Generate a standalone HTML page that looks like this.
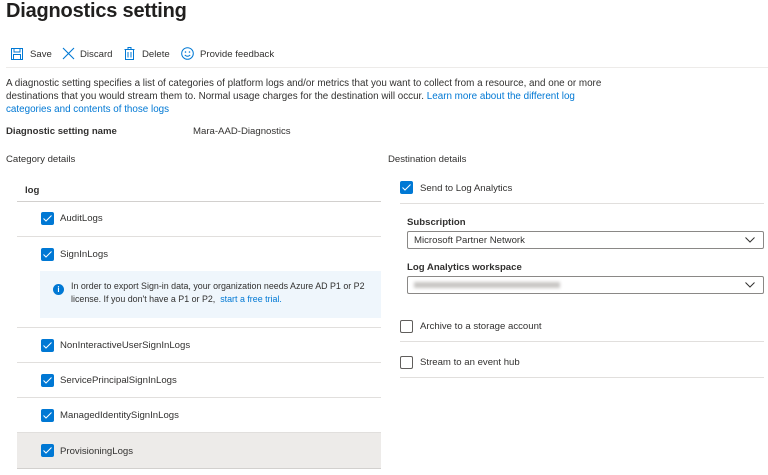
<!DOCTYPE html>
<html><head><meta charset="utf-8"><style>
body{margin:0;width:768px;height:475px;background:#fff;font-family:"Liberation Sans",sans-serif;color:#323130;position:relative;overflow:hidden}
.a{position:absolute;white-space:nowrap}
.t{font-size:9.6px}
.ln{position:absolute;height:1px;background:#e1dfdd}
.cb{position:absolute;width:13px;height:13px;border-radius:2px;background:#0078d4}
.cb svg{position:absolute;left:2px;top:3px}
.ub{position:absolute;width:11px;height:11px;border:1px solid #605e5c;border-radius:2px;background:#fff}
.lk{color:#0078d4}
.dd{position:absolute;border:1px solid #8a8886;border-radius:2px;height:16px;background:#fff}
.d{font-size:9.85px}
</style></head><body>
<div class="a" style="left:6px;top:0px;font-size:20px;font-weight:bold;color:#201f1e;letter-spacing:-0.2px">Diagnostics setting</div>

<svg class="a" style="left:11px;top:48px" width="12" height="12" viewBox="0 0 12 12"><rect x="0.5" y="0.5" width="11" height="11" fill="none" stroke="#0078d4"/><rect x="3" y="0.5" width="6" height="3.5" fill="none" stroke="#0078d4"/><rect x="2.5" y="6.5" width="7" height="5" fill="none" stroke="#0078d4"/></svg>
<div class="a t" style="left:30px;top:49px">Save</div>
<svg class="a" style="left:62px;top:47px" width="13" height="13" viewBox="0 0 13 13"><path d="M1 1L12 12M12 1L1 12" stroke="#0078d4" stroke-width="1.1"/></svg>
<div class="a t" style="left:80px;top:49px">Discard</div>
<svg class="a" style="left:124px;top:47px" width="11" height="13" viewBox="0 0 11 13"><path d="M0.5 2.5H10.5M4 2.5V0.5H7V2.5M1.5 2.5V12.5H9.5V2.5M4 5V10.5M7 5V10.5" fill="none" stroke="#0078d4"/></svg>
<div class="a t" style="left:142px;top:49px">Delete</div>
<svg class="a" style="left:181px;top:47px" width="13" height="13" viewBox="0 0 13 13"><circle cx="6.5" cy="6.5" r="5.8" fill="none" stroke="#0078d4"/><circle cx="4.5" cy="5" r="0.8" fill="#0078d4"/><circle cx="8.5" cy="5" r="0.8" fill="#0078d4"/><path d="M3.8 8Q6.5 10.5 9.2 8" fill="none" stroke="#0078d4"/></svg>
<div class="a t" style="left:200px;top:49px">Provide feedback</div>
<div class="ln" style="left:6px;top:67px;width:762px;background:#edebe9"></div>

<div class="a d" style="left:6px;top:78px">A diagnostic setting specifies a list of categories of platform logs and/or metrics that you want to collect from a resource, and one or more</div>
<div class="a d" style="left:6px;top:91px">destinations that you would stream them to. Normal usage charges for the destination will occur. <span class="lk">Learn more about the different log</span></div>
<div class="a d lk" style="left:6px;top:104px">categories and contents of those logs</div>

<div class="a t" style="left:6px;top:126px;font-weight:bold">Diagnostic setting name</div>
<div class="a t" style="left:193px;top:126px">Mara-AAD-Diagnostics</div>
<div class="a t" style="left:6px;top:154px">Category details</div>
<div class="a t" style="left:388px;top:154px">Destination details</div>

<div class="a t" style="left:25px;top:185px;font-weight:bold">log</div>
<div class="ln" style="left:17px;top:201px;width:364px;background:#d2d0ce"></div>

<div class="cb" style="left:41px;top:212px"><svg width="9" height="7"><path d="M0.5 3.5L3 6L8.5 0.5" fill="none" stroke="#fff" stroke-width="1"/></svg></div>
<div class="a t" style="left:60px;top:213px">AuditLogs</div>
<div class="ln" style="left:17px;top:236px;width:364px"></div>

<div class="cb" style="left:41px;top:248px"><svg width="9" height="7"><path d="M0.5 3.5L3 6L8.5 0.5" fill="none" stroke="#fff" stroke-width="1"/></svg></div>
<div class="a t" style="left:60px;top:249px">SignInLogs</div>
<div class="a" style="left:40px;top:271px;width:341px;height:47px;background:#eff6fc"></div>
<div class="a" style="left:53px;top:284px;width:11px;height:11px;border-radius:50%;background:#0078d4;color:#fff;font-size:8px;font-weight:bold;text-align:center;line-height:11px">i</div>
<div class="a" style="left:71px;top:281px;font-size:8.9px">In order to export Sign-in data, your organization needs Azure AD P1 or P2</div>
<div class="a" style="left:71px;top:294px;font-size:8.9px">license. If you don't have a P1 or P2, &nbsp;<span class="lk">start a free trial.</span></div>
<div class="ln" style="left:17px;top:327px;width:364px"></div>

<div class="cb" style="left:41px;top:339px"><svg width="9" height="7"><path d="M0.5 3.5L3 6L8.5 0.5" fill="none" stroke="#fff" stroke-width="1"/></svg></div>
<div class="a t" style="left:60px;top:340px">NonInteractiveUserSignInLogs</div>
<div class="ln" style="left:17px;top:362px;width:364px"></div>

<div class="cb" style="left:41px;top:374px"><svg width="9" height="7"><path d="M0.5 3.5L3 6L8.5 0.5" fill="none" stroke="#fff" stroke-width="1"/></svg></div>
<div class="a t" style="left:60px;top:375px">ServicePrincipalSignInLogs</div>
<div class="ln" style="left:17px;top:397px;width:364px"></div>

<div class="cb" style="left:41px;top:409px"><svg width="9" height="7"><path d="M0.5 3.5L3 6L8.5 0.5" fill="none" stroke="#fff" stroke-width="1"/></svg></div>
<div class="a t" style="left:60px;top:410px">ManagedIdentitySignInLogs</div>
<div class="ln" style="left:17px;top:432px;width:364px"></div>

<div class="a" style="left:17px;top:433px;width:364px;height:35px;background:#edebe9"></div>
<div class="cb" style="left:41px;top:444px"><svg width="9" height="7"><path d="M0.5 3.5L3 6L8.5 0.5" fill="none" stroke="#fff" stroke-width="1"/></svg></div>
<div class="a t" style="left:60px;top:446px">ProvisioningLogs</div>
<div class="ln" style="left:17px;top:468px;width:364px;background:#d2d0ce"></div>

<div class="cb" style="left:400px;top:181px"><svg width="9" height="7"><path d="M0.5 3.5L3 6L8.5 0.5" fill="none" stroke="#fff" stroke-width="1"/></svg></div>
<div class="a t" style="left:420px;top:183px">Send to Log Analytics</div>
<div class="ln" style="left:400px;top:203px;width:364px"></div>

<div class="a t" style="left:407px;top:217px;font-weight:bold">Subscription</div>
<div class="dd" style="left:407px;top:231px;width:355px"></div>
<div class="a t" style="left:414px;top:235px">Microsoft Partner Network</div>
<svg class="a" style="left:745px;top:237px" width="10" height="6"><path d="M0.5 0.5L5 5L9.5 0.5" fill="none" stroke="#323130"/></svg>

<div class="a t" style="left:407px;top:262px;font-weight:bold">Log Analytics workspace</div>
<div class="dd" style="left:407px;top:276px;width:355px"></div>
<div class="a" style="left:414px;top:282px;width:146px;height:6px;background:#c8c6c4;filter:blur(1.5px)"></div>
<svg class="a" style="left:745px;top:282px" width="10" height="6"><path d="M0.5 0.5L5 5L9.5 0.5" fill="none" stroke="#323130"/></svg>

<div class="ub" style="left:400px;top:320px"></div>
<div class="a t" style="left:420px;top:321px">Archive to a storage account</div>
<div class="ln" style="left:400px;top:341px;width:364px"></div>

<div class="ub" style="left:400px;top:356px"></div>
<div class="a t" style="left:420px;top:357px">Stream to an event hub</div>
<div class="ln" style="left:400px;top:377px;width:364px"></div>
</body></html>
